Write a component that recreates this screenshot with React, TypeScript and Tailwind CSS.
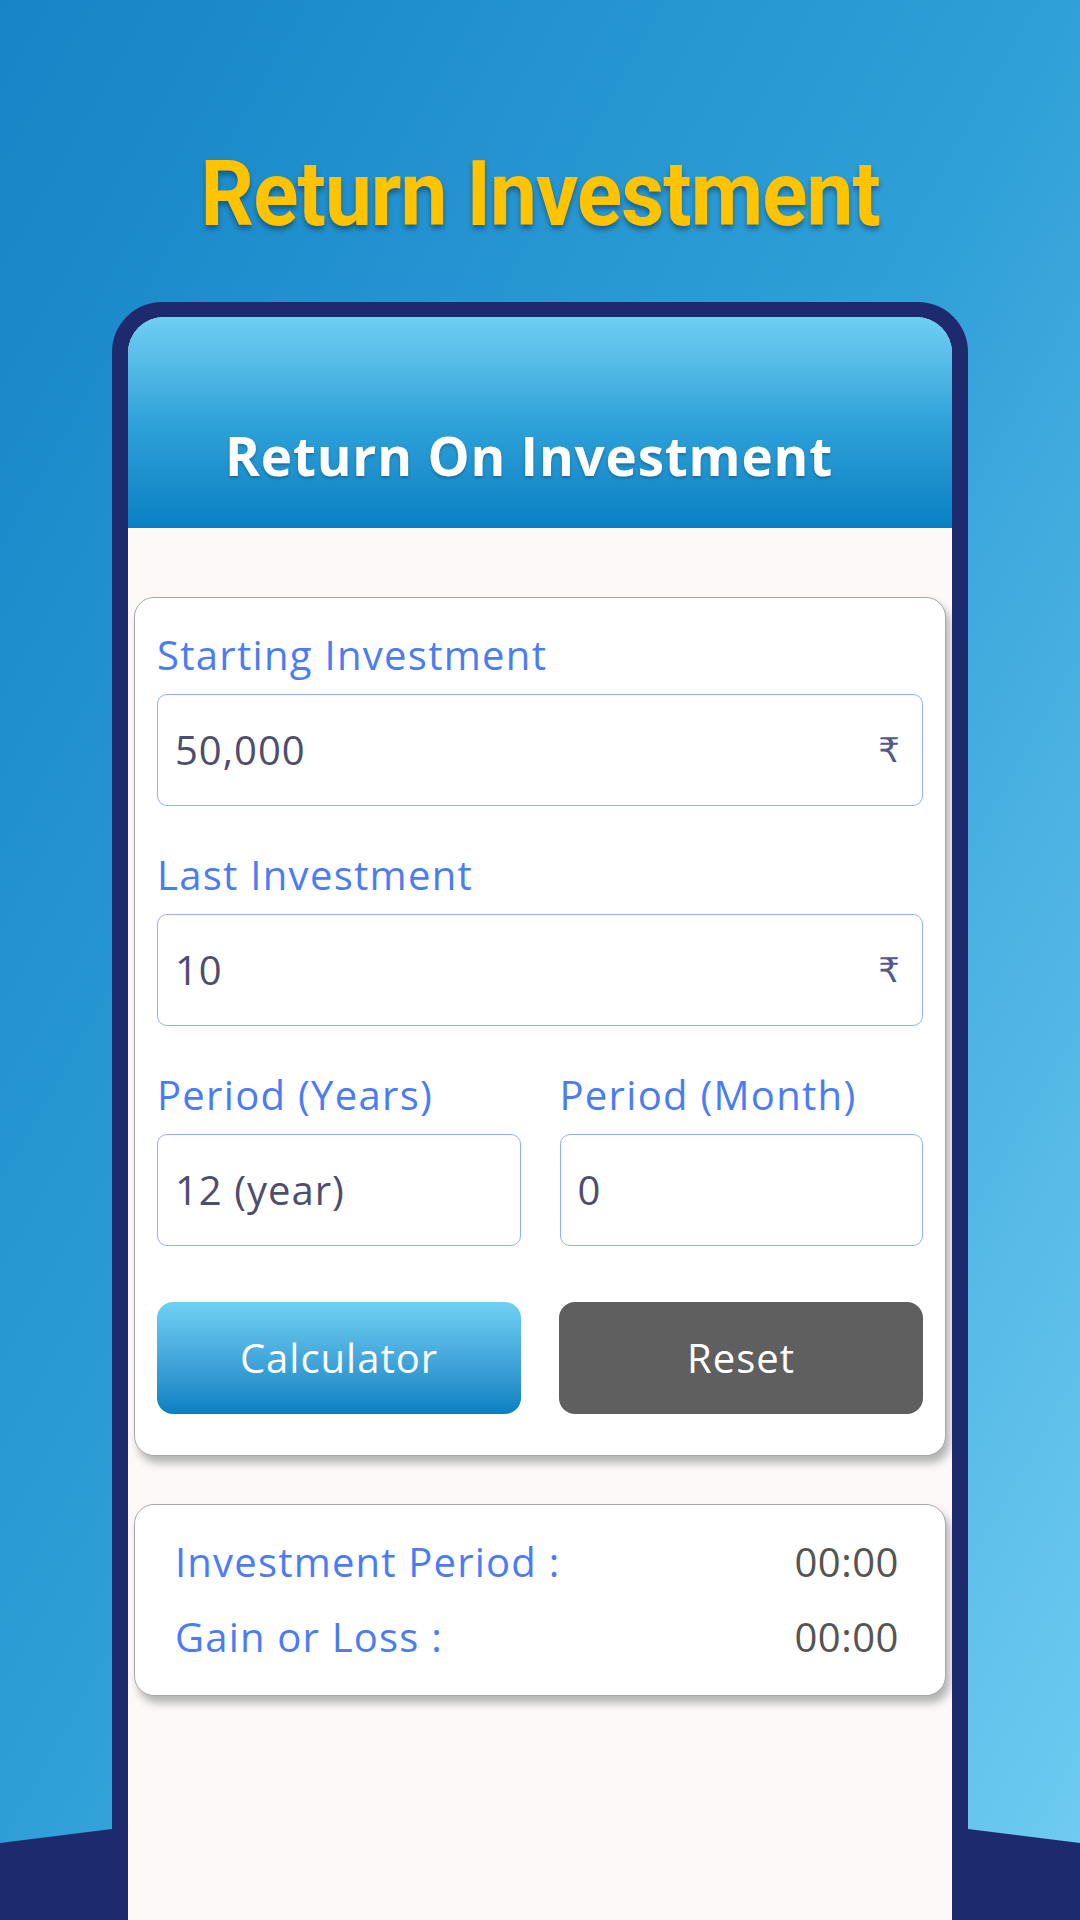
import React from "react";

const Field = ({ label, value, rupee }: { label: string; value: string; rupee?: boolean }) => (
  <div className="flex flex-col">
    <div className="text-[40px] leading-none font-medium text-[#4b7cf6] tracking-[1.3px] -mt-[1px]">{label}</div>
    <div className="mt-[19px] h-[112px] rounded-[10px] border-[1.5px] border-[#93aff9] bg-white flex items-center justify-between pl-[17px] pr-[22px]">
      <span className="text-[40px] leading-none text-[#4d4e6e] tracking-[1px]">{value}</span>
      {rupee && <span className="text-[34px] leading-none text-[#55568a] font-['DejaVu_Sans',sans-serif]">₹</span>}
    </div>
  </div>
);

export default function App() {
  return (
    <div className="relative w-[1080px] h-[1920px] overflow-hidden bg-gradient-to-br from-[#1684c6] via-[#2fa0d8] to-[#70cdf2] font-['Open_Sans',sans-serif]">
      <svg className="absolute left-0 bottom-0 w-[1080px] h-[91px]" viewBox="0 1829 1080 91" preserveAspectRatio="none">
        <polygon points="0,1843 112,1829 968,1829 1080,1843 1080,1920 0,1920" fill="#1e2a6e" />
      </svg>
      <div className="relative flex flex-col items-center h-full">
        <h1 className="pt-[150px] text-[90px] leading-none font-bold text-[#ffc300] font-['Roboto',sans-serif] tracking-[-1px] scale-x-[0.93] [text-shadow:0_4px_5px_rgba(0,0,0,0.35)]">
          Return Investment
        </h1>
        <div className="mt-[62px] w-[856px] flex-1 rounded-t-[50px] bg-[#1e2a6e] px-[16px] pt-[15px] flex flex-col">
          <div className="flex-1 rounded-t-[36px] overflow-hidden bg-[#fcf9f8] flex flex-col">
            <div className="h-[211px] shrink-0 bg-gradient-to-b from-[#6fcff3] via-[#2ea2d9] to-[#0680c3] flex items-end justify-center pb-[46px] pr-[22px]">
              <span className="text-[53px] leading-none font-bold text-white tracking-[0.8px] [text-shadow:0_2px_3px_rgba(0,0,0,0.25)]">
                Return On Investment
              </span>
            </div>
            <div className="mx-[6px] mt-[69px] rounded-[20px] border border-[#a8a8a8] bg-white shadow-[4px_7px_9px_rgba(0,0,0,0.28)] px-[22px] pt-[38px] pb-[41px] flex flex-col">
              <Field label="Starting Investment" value="50,000" rupee />
              <div className="mt-[50px]">
                <Field label="Last Investment" value="10" rupee />
              </div>
              <div className="mt-[50px] grid grid-cols-2 gap-[39px]">
                <Field label="Period (Years)" value="12 (year)" />
                <Field label="Period (Month)" value="0" />
              </div>
              <div className="mt-[56px] grid grid-cols-2 gap-[38px]">
                <button className="h-[112px] rounded-[16px] bg-gradient-to-b from-[#70d0f4] to-[#0580c2] text-white text-[40px] font-medium tracking-[1px]">
                  Calculator
                </button>
                <button className="h-[112px] rounded-[16px] bg-[#5f5f5f] text-white text-[40px] font-medium tracking-[1px]">
                  Reset
                </button>
              </div>
            </div>
            <div className="mx-[6px] mt-[48px] rounded-[20px] border border-[#a8a8a8] bg-white shadow-[4px_7px_9px_rgba(0,0,0,0.28)] pl-[40px] pr-[46px] pt-[37px] pb-[38px] flex flex-col gap-[35px]">
              <div className="flex justify-between text-[40px] leading-none">
                <span className="text-[#4b7cf6] font-medium tracking-[1.2px]">Investment Period :</span>
                <span className="text-[#555555] tracking-[0.5px]">00:00</span>
              </div>
              <div className="flex justify-between text-[40px] leading-none">
                <span className="text-[#4b7cf6] font-medium tracking-[1.2px]">Gain or Loss :</span>
                <span className="text-[#555555] tracking-[0.5px]">00:00</span>
              </div>
            </div>
          </div>
        </div>
      </div>
    </div>
  );
}
